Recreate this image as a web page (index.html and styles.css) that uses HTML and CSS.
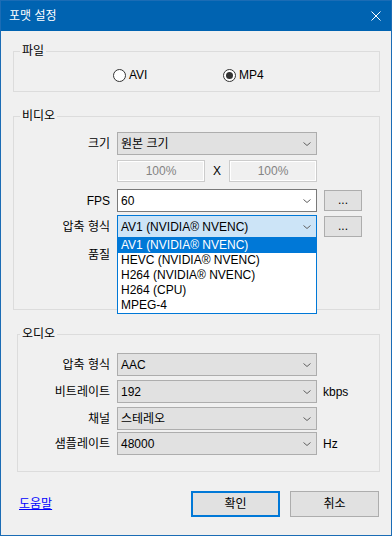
FILE: index.html
```html
<!DOCTYPE html>
<html lang="ko">
<head>
    <meta charset="utf-8"/>
    <title>포맷 설정</title>
    <link rel="stylesheet" href="styles.css">
</head>
<body>
<div class="window">
    <div class="titlebar">
        <span class="title">포맷 설정</span>
        <svg class="close" width="10" height="10" viewBox="0 0 10 10">
            <path d="M0.5 0.5L9.5 9.5M9.5 0.5L0.5 9.5" stroke="#fff" stroke-width="1" fill="none"/>
        </svg>
    </div>
    <div class="content">
        <!-- 파일 -->
        <fieldset class="group group-file">
            <legend>파일</legend>
            <div class="radios">
                <label class="radio"><span class="circle"></span>AVI</label>
                <label class="radio checked"><span class="circle"></span>MP4</label>
            </div>
        </fieldset>

        <!-- 비디오 -->
        <fieldset class="group group-video">
            <legend>비디오</legend>
            <div class="row r1">
                <span class="label">크기</span>
                <div class="combo list"><span>원본 크기</span><svg class="chev" width="8" height="4" viewBox="0 0 8 4"><path d="M0.5 0.5L4 3.5L7.5 0.5" stroke="#606060" fill="none"/></svg></div>
            </div>
            <div class="row r2">
                <span class="label"></span>
                <div class="sizes">
                    <span class="edit off">100%</span>
                    <span class="times">X</span>
                    <span class="edit off">100%</span>
                </div>
            </div>
            <div class="row r3">
                <span class="label">FPS</span>
                <div class="combo edit-combo"><span>60</span><svg class="chev" width="8" height="4" viewBox="0 0 8 4"><path d="M0.5 0.5L4 3.5L7.5 0.5" stroke="#606060" fill="none"/></svg></div>
                <span class="btn dots">...</span>
            </div>
            <div class="row r4">
                <span class="label">압축 형식</span>
                <div class="combo focus">
                    <span>AV1 (NVIDIA® NVENC)</span><svg class="chev" width="8" height="4" viewBox="0 0 8 4"><path d="M0.5 0.5L4 3.5L7.5 0.5" stroke="#606060" fill="none"/></svg>
                    <ul class="droplist">
                        <li class="sel">AV1 (NVIDIA® NVENC)</li>
                        <li>HEVC (NVIDIA® NVENC)</li>
                        <li>H264 (NVIDIA® NVENC)</li>
                        <li>H264 (CPU)</li>
                        <li>MPEG-4</li>
                    </ul>
                </div>
                <span class="btn dots">...</span>
            </div>
            <div class="row r5">
                <span class="label">품질</span>
            </div>
        </fieldset>

        <!-- 오디오 -->
        <fieldset class="group group-audio">
            <legend>오디오</legend>
            <div class="row a1">
                <span class="label">압축 형식</span>
                <div class="combo list"><span>AAC</span><svg class="chev" width="8" height="4" viewBox="0 0 8 4"><path d="M0.5 0.5L4 3.5L7.5 0.5" stroke="#606060" fill="none"/></svg></div>
            </div>
            <div class="row a2">
                <span class="label">비트레이트</span>
                <div class="combo list"><span>192</span><svg class="chev" width="8" height="4" viewBox="0 0 8 4"><path d="M0.5 0.5L4 3.5L7.5 0.5" stroke="#606060" fill="none"/></svg></div>
                <span class="unit">kbps</span>
            </div>
            <div class="row a3">
                <span class="label">채널</span>
                <div class="combo list"><span>스테레오</span><svg class="chev" width="8" height="4" viewBox="0 0 8 4"><path d="M0.5 0.5L4 3.5L7.5 0.5" stroke="#606060" fill="none"/></svg></div>
            </div>
            <div class="row a4">
                <span class="label">샘플레이트</span>
                <div class="combo list"><span>48000</span><svg class="chev" width="8" height="4" viewBox="0 0 8 4"><path d="M0.5 0.5L4 3.5L7.5 0.5" stroke="#606060" fill="none"/></svg></div>
                <span class="unit">Hz</span>
            </div>
        </fieldset>

        <div class="footer">
            <a class="help" href="#">도움말</a>
            <div class="buttons">
                <span class="btn big default">확인</span>
                <span class="btn big">취소</span>
            </div>
        </div>
    </div>
</div>
</body>
</html>
```

FILE: styles.css
```css
* {
    box-sizing: border-box;
}
html, body {
    margin: 0;
    padding: 0;
}
body {
    font-family: "Liberation Sans", "Noto Sans CJK KR", sans-serif;
    font-size: 12px;
    line-height: 16px;
    color: #000;
    background: #f0f0f0;
}
.window {
    width: 392px;
    height: 536px;
    border: 1px solid #1b6cb5;
    background: #f0f0f0;
    display: flex;
    flex-direction: column;
}
.titlebar {
    height: 30px;
    flex: none;
    background: #0063b1;
    color: #fff;
    display: flex;
    align-items: center;
    justify-content: space-between;
    padding: 0 10px 0 8px;
}
.close {
    display: block;
}
.content {
    padding-left: 12px;
}

/* group boxes */
.group {
    margin: 0;
    padding: 0;
    border: 1px solid #dcdcdc;
    min-width: 0;
}
.group legend {
    margin-left: 6px;
    padding: 0 2px;
    line-height: 14px;
}
.group-file {
    width: 367px;
    margin-top: 13px;
    padding-bottom: 8px;
}
.group-video {
    width: 367px;
    margin-top: 17px;
    padding-bottom: 43px;
}
.group-audio {
    width: 363px;
    margin-top: 17px;
    margin-left: 4px;
    padding-bottom: 16px;
}
.group-audio legend {
    margin-left: 2px;
}

/* radios */
.radios {
    display: flex;
    margin-top: 9px;
    padding-left: 99px;
}
.radio {
    width: 110px;
    display: flex;
    align-items: center;
    gap: 3px;
    height: 16px;
}
.circle {
    width: 13px;
    height: 13px;
    border: 1px solid #333;
    border-radius: 50%;
    background: #fff;
    display: flex;
    align-items: center;
    justify-content: center;
}
.checked .circle::after {
    content: "";
    width: 7px;
    height: 7px;
    border-radius: 50%;
    background: #333;
}

/* rows */
.row {
    display: flex;
    align-items: center;
    height: 23px;
}
.label {
    width: 96px;
    margin-right: 7px;
    text-align: right;
    flex: none;
}
.group-audio .label {
    width: 92px;
}
.r1 { margin-top: 9px; }
.r2 { margin-top: 5px; height: 22px; }
.r3 { margin-top: 7px; }
.r4 { margin-top: 3px; }
.r5 { margin-top: 5px; }
.a1 { margin-top: 12px; }
.a2 { margin-top: 4px; }
.a3 { margin-top: 4px; }
.a4 { margin-top: 2px; }

.combo {
    width: 200px;
    height: 23px;
    flex: none;
    border: 1px solid #adadad;
    background: #e1e1e1;
    display: flex;
    align-items: center;
    justify-content: space-between;
    padding: 0 5px 0 3px;
    position: relative;
}
.edit-combo {
    background: #fff;
    border-color: #7a7a7a;
}
.focus {
    background: #cce4f7;
    border-color: #0078d7;
}
.chev {
    display: block;
}

.sizes {
    width: 200px;
    display: flex;
    align-items: center;
}
.edit {
    width: 88px;
    height: 22px;
    border: 1px solid #cccccc;
    box-shadow: inset 0 0 0 1px #fff;
    background: #f0f0f0;
    text-align: center;
    line-height: 20px;
}
.off {
    color: #838383;
}
.times {
    width: 24px;
    text-align: center;
}

.btn {
    border: 1px solid #adadad;
    background: #e1e1e1;
    text-align: center;
    flex: none;
}
.dots {
    width: 38px;
    height: 21px;
    margin-left: 7px;
    line-height: 19px;
}
.unit {
    margin-left: 6px;
}

/* dropdown list of 압축 형식 */
.droplist {
    position: absolute;
    left: -1px;
    top: 21px;
    width: 200px;
    margin: 0;
    padding: 0;
    list-style: none;
    background: #fff;
    border: 1px solid #0078d7;
    z-index: 2;
}
.droplist li {
    height: 15px;
    line-height: 15px;
    padding-left: 3px;
}
.droplist .sel {
    background: #0078d7;
    color: #fff;
}

/* footer */
.footer {
    width: 366px;
    margin-top: 19px;
    padding-left: 6px;
    display: flex;
    align-items: center;
    justify-content: space-between;
}
.help {
    color: #0000ff;
    text-decoration: underline;
}
.buttons {
    display: flex;
    gap: 10px;
}
.big {
    width: 89px;
    height: 26px;
    line-height: 24px;
}
.default {
    border: 2px solid #0078d7;
    line-height: 22px;
}
```
